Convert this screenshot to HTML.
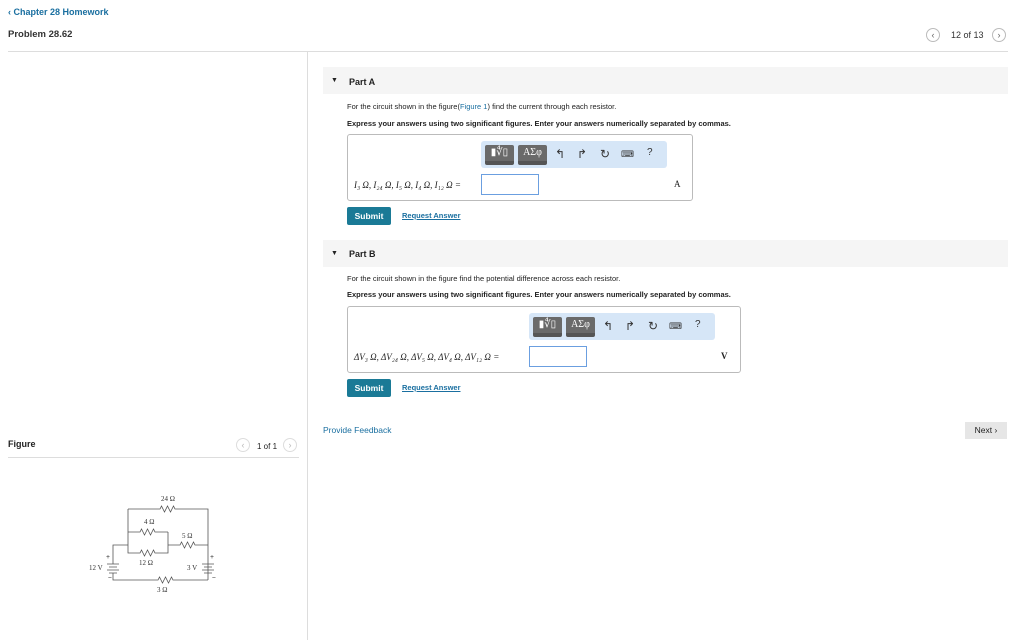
<!DOCTYPE html>
<html><head><meta charset="utf-8"><style>
*{margin:0;padding:0;box-sizing:border-box}
body{width:1024px;height:640px;background:#fff;font-family:"Liberation Sans",Arial,sans-serif;color:#222;position:relative;overflow:hidden}
.a{position:absolute;white-space:nowrap}
.band{position:absolute;left:323px;width:685px;height:27px;background:#f5f5f5}
.box{position:absolute;border:1px solid #bbb;border-radius:3px;left:347px}
.tb{position:absolute;background:#d6e6f7;border-radius:3px;height:27px;width:186px}
.btn{position:absolute;top:4px;height:20px;width:29px;background:#6a6a6a;border-radius:2px;color:#fff;font-size:10px;font-family:"Liberation Serif",serif;text-align:center;line-height:15px;border-bottom:4px solid #555}
.ic{position:absolute;top:6px;font-size:12px;color:#333}
.inp{position:absolute;width:58px;height:21px;border:1px solid #6b9fe0;background:#fff}
.sub{position:absolute;left:347px;width:44px;height:18px;background:#1a7a96;color:#fff;font-size:8.5px;font-weight:bold;text-align:center;line-height:18px;border-radius:2px}
.req{position:absolute;left:402px;font-size:7.5px;font-weight:bold;color:#1a6fa0;text-decoration:underline}
.math{position:absolute;font-family:"Liberation Serif",serif;font-size:9px;font-style:italic}
.circ{position:absolute;width:14px;height:14px;border:1px solid #bbb;border-radius:50%;font-size:9px;color:#666;text-align:center;line-height:12px}
</style></head><body>
<div class="a" style="left:8px;top:7px;font-size:9px;font-weight:bold;color:#1a6fa0">‹ Chapter 28 Homework</div>
<div class="a" style="left:8px;top:29px;font-size:9.5px;font-weight:bold;color:#333">Problem 28.62</div>
<div class="circ" style="left:926px;top:28px">‹</div>
<div class="a" style="left:951px;top:30px;font-size:9px;color:#333">12 of 13</div>
<div class="circ" style="left:992px;top:28px">›</div>
<div class="a" style="left:8px;top:51px;width:1000px;height:1px;background:#ddd"></div>
<div class="a" style="left:307px;top:52px;width:1px;height:588px;background:#ddd"></div>

<div class="band" style="top:67px"></div>
<div class="a" style="left:331px;top:77px;font-size:7px">▼</div>
<div class="a" style="left:349px;top:77px;font-size:9px;font-weight:bold">Part A</div>
<div class="a" style="left:347px;top:102px;font-size:7.5px">For the circuit shown in the figure(<span style="color:#1a6fa0">Figure 1</span>) find the current through each resistor.</div>
<div class="a" style="left:347px;top:119px;font-size:7.5px;font-weight:bold">Express your answers using two significant figures. Enter your answers numerically separated by commas.</div>
<div class="box" style="top:134px;width:346px;height:67px"></div>
<div class="tb" style="left:481px;top:141px">
<div class="btn" style="left:4px">▮∜▯</div><div class="btn" style="left:37px">ΑΣφ</div>
<div class="ic" style="left:74px">↰</div><div class="ic" style="left:96px">↱</div><div class="ic" style="left:119px">↻</div><div class="ic" style="left:140px;font-size:9px;top:8px">⌨</div><div class="ic" style="left:166px;font-size:10px">?</div></div>
<div class="math" style="left:354px;top:180px">I₃ Ω, I₂₄ Ω, I₅ Ω, I₄ Ω, I₁₂ Ω =</div>
<div class="inp" style="left:481px;top:174px"></div>
<div class="a" style="left:674px;top:179px;font-family:'Liberation Serif',serif;font-size:9px">A</div>
<div class="sub" style="top:207px">Submit</div>
<div class="req" style="top:211px">Request Answer</div>

<div class="band" style="top:240px"></div>
<div class="a" style="left:331px;top:250px;font-size:7px">▼</div>
<div class="a" style="left:349px;top:249px;font-size:9px;font-weight:bold">Part B</div>
<div class="a" style="left:347px;top:274px;font-size:7.5px">For the circuit shown in the figure find the potential difference across each resistor.</div>
<div class="a" style="left:347px;top:290px;font-size:7.5px;font-weight:bold">Express your answers using two significant figures. Enter your answers numerically separated by commas.</div>
<div class="box" style="top:306px;width:394px;height:67px"></div>
<div class="tb" style="left:529px;top:313px">
<div class="btn" style="left:4px">▮∜▯</div><div class="btn" style="left:37px">ΑΣφ</div>
<div class="ic" style="left:74px">↰</div><div class="ic" style="left:96px">↱</div><div class="ic" style="left:119px">↻</div><div class="ic" style="left:140px;font-size:9px;top:8px">⌨</div><div class="ic" style="left:166px;font-size:10px">?</div></div>
<div class="math" style="left:354px;top:352px">ΔV₃ Ω, ΔV₂₄ Ω, ΔV₅ Ω, ΔV₄ Ω, ΔV₁₂ Ω =</div>
<div class="inp" style="left:529px;top:346px"></div>
<div class="a" style="left:721px;top:351px;font-family:'Liberation Serif',serif;font-size:9px;font-weight:bold">V</div>
<div class="sub" style="top:379px">Submit</div>
<div class="req" style="top:383px">Request Answer</div>

<div class="a" style="left:323px;top:425px;font-size:8.5px;color:#1a6fa0">Provide Feedback</div>
<div class="a" style="left:965px;top:422px;width:42px;height:17px;background:#e6e6e6;font-size:8.5px;text-align:center;line-height:17px">Next ›</div>

<div class="a" style="left:8px;top:439px;font-size:9px;font-weight:bold">Figure</div>
<div class="circ" style="left:236px;top:438px;border-color:#ddd;color:#bbb">‹</div>
<div class="a" style="left:257px;top:442px;font-size:8px">1 of 1</div>
<div class="circ" style="left:283px;top:438px;border-color:#ddd;color:#bbb">›</div>
<div class="a" style="left:8px;top:457px;width:291px;height:1px;background:#ddd"></div>

<svg class="a" style="left:80px;top:485px" width="150" height="110" viewBox="80 485 150 110">
<g fill="none" stroke="#555" stroke-width="0.8">
<path d="M128 509H160l1.5-3 3 6 3-6 3 6 3-6 1.5 3H208V580"/>
<path d="M128 509V553H140l1.5-3 3 6 3-6 3 6 3-6 1.5 3H168V532"/>
<path d="M128 532H140l1.5-3 3 6 3-6 3 6 3-6 1.5 3H168"/>
<path d="M168 545H180l1.5-3 3 6 3-6 3 6 3-6 1.5 3H208"/>
<path d="M128 545H113V564M113 573V580H158l1.5-3 3 6 3-6 3 6 3-6 1.5 3H208"/>
<path d="M107 564h12M109 567h8M107 570h12M109 573h8"/>
<path d="M202 564h12M204 567h8M202 570h12M204 573h8"/>
</g>
<g font-family="Liberation Serif,serif" font-size="7" fill="#333">
<text x="161" y="501">24 Ω</text><text x="144" y="524">4 Ω</text><text x="182" y="538">5 Ω</text>
<text x="139" y="565">12 Ω</text><text x="157" y="592">3 Ω</text>
<text x="89" y="570">12 V</text><text x="187" y="570">3 V</text>
<text x="106" y="559" font-weight="bold">+</text><text x="108" y="580" font-weight="bold">−</text>
<text x="210" y="559" font-weight="bold">+</text><text x="212" y="580" font-weight="bold">−</text>
</g></svg>
</body></html>
